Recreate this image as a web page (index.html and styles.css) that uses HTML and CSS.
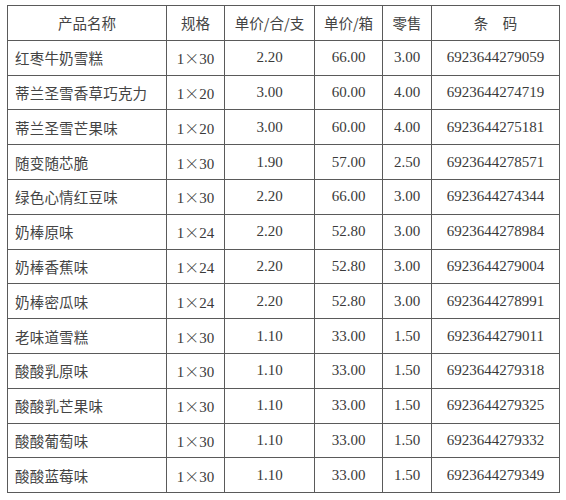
FILE: index.html
```html
<!DOCTYPE html>
<html>
<head>
<meta charset="utf-8">
<link rel="stylesheet" href="styles.css">
</head>
<body>
<table class="price">
  <colgroup>
    <col class="c1"><col class="c2"><col class="c3"><col class="c4"><col class="c5"><col class="c6">
  </colgroup>
  <thead>
    <tr><th>产品名称</th><th>规格</th><th>单价/合/支</th><th>单价/箱</th><th>零售</th><th>条　码</th></tr>
  </thead>
  <tbody>
    <tr><td class="name">红枣牛奶雪糕</td><td>1<span class="x">×</span>30</td><td>2.20</td><td>66.00</td><td>3.00</td><td>6923644279059</td></tr>
    <tr><td class="name">蒂兰圣雪香草巧克力</td><td>1<span class="x">×</span>20</td><td>3.00</td><td>60.00</td><td>4.00</td><td>6923644274719</td></tr>
    <tr><td class="name">蒂兰圣雪芒果味</td><td>1<span class="x">×</span>20</td><td>3.00</td><td>60.00</td><td>4.00</td><td>6923644275181</td></tr>
    <tr><td class="name">随变随芯脆</td><td>1<span class="x">×</span>30</td><td>1.90</td><td>57.00</td><td>2.50</td><td>6923644278571</td></tr>
    <tr><td class="name">绿色心情红豆味</td><td>1<span class="x">×</span>30</td><td>2.20</td><td>66.00</td><td>3.00</td><td>6923644274344</td></tr>
    <tr><td class="name">奶棒原味</td><td>1<span class="x">×</span>24</td><td>2.20</td><td>52.80</td><td>3.00</td><td>6923644278984</td></tr>
    <tr><td class="name">奶棒香蕉味</td><td>1<span class="x">×</span>24</td><td>2.20</td><td>52.80</td><td>3.00</td><td>6923644279004</td></tr>
    <tr><td class="name">奶棒密瓜味</td><td>1<span class="x">×</span>24</td><td>2.20</td><td>52.80</td><td>3.00</td><td>6923644278991</td></tr>
    <tr><td class="name">老味道雪糕</td><td>1<span class="x">×</span>30</td><td>1.10</td><td>33.00</td><td>1.50</td><td>6923644279011</td></tr>
    <tr><td class="name">酸酸乳原味</td><td>1<span class="x">×</span>30</td><td>1.10</td><td>33.00</td><td>1.50</td><td>6923644279318</td></tr>
    <tr><td class="name">酸酸乳芒果味</td><td>1<span class="x">×</span>30</td><td>1.10</td><td>33.00</td><td>1.50</td><td>6923644279325</td></tr>
    <tr><td class="name">酸酸葡萄味</td><td>1<span class="x">×</span>30</td><td>1.10</td><td>33.00</td><td>1.50</td><td>6923644279332</td></tr>
    <tr><td class="name">酸酸蓝莓味</td><td>1<span class="x">×</span>30</td><td>1.10</td><td>33.00</td><td>1.50</td><td>6923644279349</td></tr>
  </tbody>
</table>
</body>
</html>
```

FILE: styles.css
```css
html, body {
  margin: 0;
  padding: 0;
  background: #ffffff;
}
body {
  padding: 5px 0 0 7px;
}
.price {
  border-collapse: collapse;
  table-layout: fixed;
  width: 552px;
  font-family: "Liberation Serif", "Noto Sans CJK SC", serif;
  font-size: 15px;
  color: #3a3a3a;
}
.c1 { width: 159px; }
.c2 { width: 58px; }
.c3 { width: 90px; }
.c4 { width: 68px; }
.c5 { width: 49px; }
.c6 { width: 128px; }
.price th,
.price td {
  border: 1px solid #5a5a5a;
  height: 33.8px;
  padding: 0;
  text-align: center;
  vertical-align: middle;
  white-space: nowrap;
}
.price th {
  font-family: "Noto Sans CJK SC", sans-serif;
  font-weight: normal;
  font-size: 14.5px;
  color: #444;
}
.price td.name {
  text-align: left;
  padding-left: 7px;
  font-family: "Noto Sans CJK SC", sans-serif;
  font-size: 14.5px;
  letter-spacing: 0.2px;
  color: #444;
}
.x {
  font-family: "Noto Sans CJK SC", sans-serif;
  font-size: 15px;
  font-weight: 300;
}
```
